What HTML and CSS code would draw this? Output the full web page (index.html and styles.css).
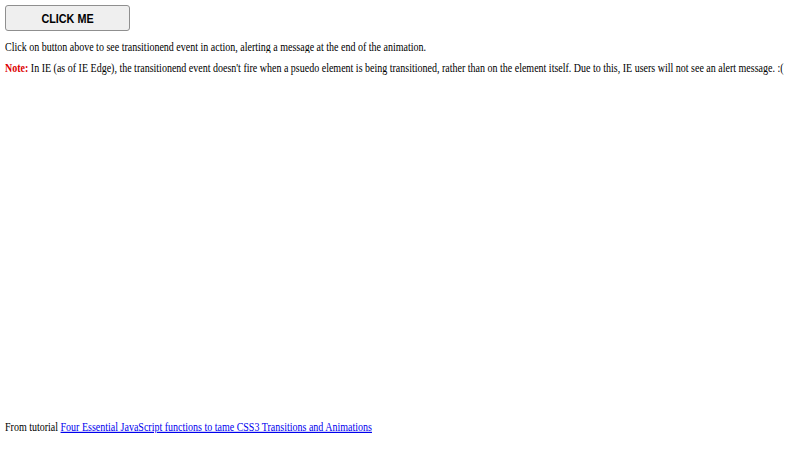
FILE: index.html
```html
<!DOCTYPE html>
<html>
<head>
<meta charset="utf-8">
<link rel="stylesheet" href="styles.css">
</head>
<body>
<div class="page">
  <button class="btn"><span class="btn-label">CLICK ME</span></button>
  <p class="msg">Click on button above to see transitionend event in action, alerting a message at the end of the animation.</p>
  <p class="msg"><b class="note">Note:</b> In IE (as of IE Edge), the transitionend event doesn't fire when a psuedo element is being transitioned, rather than on the element itself. Due to this, IE users will not see an alert message. :(</p>
  <div class="footer">From tutorial <a href="#">Four Essential JavaScript functions to tame CSS3 Transitions and Animations</a></div>
</div>
</body>
</html>
```
FILE: styles.css
```css
html, body { margin: 0; padding: 0; }
body { font-family: "Liberation Serif", serif; font-size: 10px; color: #000; background: #fff; }
.page { display: flex; flex-direction: column; align-items: flex-start; height: 450px; box-sizing: border-box; padding: 5px 0 0 5px; }
.btn { width: 125px; height: 26px; font-family: "Liberation Sans", Arial, sans-serif; font-weight: bold; font-size: 10.8px; background: #efefef; border: 1px solid #8f8f8f; border-radius: 3px; color: #000; padding: 0; margin: 0; }
.btn-label { display: inline-block; transform: scaleY(1.2); }
.msg { margin: 9px 0 0 0; line-height: 14px; white-space: nowrap; transform: scaleY(1.2); }
.msg + .msg { margin-top: 7px; }
.note { color: #d00; }
.footer { margin-top: auto; margin-bottom: 16px; line-height: 14px; transform: scaleY(1.2); }
.footer a { color: #00e; }
```
